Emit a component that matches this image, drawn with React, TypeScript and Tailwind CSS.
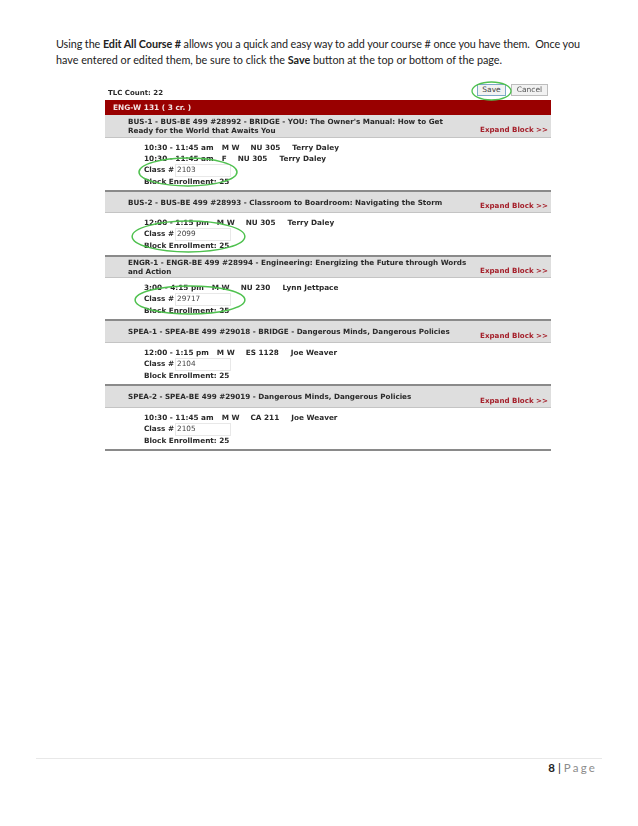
const BLOCKS = [
  {
    title: "BUS-1 - BUS-BE 499 #28992 - BRIDGE - YOU: The Owner's Manual: How to Get Ready for the World that Awaits You",
    meetings: [
      { time: "10:30 - 11:45 am", days: "M W", room: "NU 305", who: "Terry Daley" },
      { time: "10:30 - 11:45 am", days: "F", room: "NU 305", who: "Terry Daley" },
    ],
    classNo: "2103",
    ring: "w-[100px] h-[30px] -left-[6px] -top-[7.5px]",
    head: "h-[23px]",
    pad: "pb-[1.5px]",
  },
  {
    title: "BUS-2 - BUS-BE 499 #28993 - Classroom to Boardroom: Navigating the Storm",
    meetings: [{ time: "12:00 - 1:15 pm", days: "M W", room: "NU 305", who: "Terry Daley" }],
    classNo: "2099",
    ring: "w-[115px] h-[33px] -left-[13px] -top-[8.5px]",
    head: "h-[21px]",
    pad: "pb-[2.5px]",
  },
  {
    title: "ENGR-1 - ENGR-BE 499 #28994 - Engineering: Energizing the Future through Words and Action",
    meetings: [{ time: "3:00 - 4:15 pm", days: "M W", room: "NU 230", who: "Lynn Jettpace" }],
    classNo: "29717",
    ring: "w-[112px] h-[30px] -left-[10px] -top-[8.5px]",
    head: "h-[21px]",
    pad: "pb-[1.5px]",
  },
  {
    title: "SPEA-1 - SPEA-BE 499 #29018 - BRIDGE - Dangerous Minds, Dangerous Policies",
    meetings: [{ time: "12:00 - 1:15 pm", days: "M W", room: "ES 1128", who: "Joe Weaver" }],
    classNo: "2104",
    head: "h-[22px]",
    pad: "pb-[1.5px]",
  },
  {
    title: "SPEA-2 - SPEA-BE 499 #29019 - Dangerous Minds, Dangerous Policies",
    meetings: [{ time: "10:30 - 11:45 am", days: "M W", room: "CA 211", who: "Joe Weaver" }],
    classNo: "2105",
    head: "h-[22px]",
    pad: "pb-[1.5px]",
  },
];

function Ring({ className }: { className: string }) {
  return (
    <svg className={`absolute ${className}`} viewBox="0 0 100 30" preserveAspectRatio="none" fill="none">
      <ellipse cx="50" cy="15" rx="49" ry="14" stroke="#4fc14f" strokeWidth="1.5" vectorEffect="non-scaling-stroke" />
    </svg>
  );
}

function Block({ block }: { block: (typeof BLOCKS)[number] }) {
  return (
    <div>
      <div className={`flex items-center border-b border-[#c4c4c4] bg-[#dedede] pl-[23px] pr-[3px] ${block.head}`}>
        <div className="w-[340px] shrink-0 text-[7.2px] leading-[9px] font-bold text-[#2a2a2a]">{block.title}</div>
        <div className="ml-auto pt-[8px] text-[7.1px] leading-[10px] font-bold whitespace-nowrap text-[#a5202b]">{"Expand Block >>"}</div>
      </div>
      <div className={`pt-[4.5px] pl-[39px] text-[7.3px] font-bold text-[#2a2a2a] ${block.pad}`}>
        {block.meetings.map((m, i) => (
          <div key={i} className="flex h-[11px] items-center whitespace-nowrap">
            <span>{m.time}</span>
            <span className="ml-[8px]">{m.days}</span>
            <span className="ml-[11px]">{m.room}</span>
            <span className="ml-[12px]">{m.who}</span>
          </div>
        ))}
        <div className="relative flex h-[12px] items-center">
          <span className="w-[31px] whitespace-nowrap">Class #</span>
          <span className="flex h-[13px] w-[56px] items-center border border-[#e8e8e8] pl-[1px] font-normal text-[#444]">
            {block.classNo}
          </span>
          {block.ring ? <Ring className={block.ring} /> : null}
        </div>
        <div className="flex h-[12px] items-center whitespace-nowrap">Block Enrollment: 25</div>
      </div>
      <div className="h-[2px] bg-[#8a8a8a]" />
    </div>
  );
}

export default function App() {
  return (
    <div
      className="flex h-[826px] w-[638px] flex-col overflow-hidden bg-white text-[#222]"
      style={{ fontFamily: "Lato, 'Open Sans', sans-serif" }}
    >
      <div className="px-[56px] pt-[36px] text-[10.8px] leading-[16px]">
        <p className="whitespace-pre tracking-[-0.08px]">
          Using the <b>Edit All Course #</b> allows you a quick and easy way to add your course # once you have them.{"  "}Once you
        </p>
        <p className="whitespace-pre">
          have entered or edited them, be sure to click the <b>Save</b> button at the top or bottom of the page.
        </p>
      </div>

      <div
        className="ml-[105px] mt-[16px] w-[446px] blur-[0.3px]"
        style={{ fontFamily: "'DejaVu Sans', Verdana, sans-serif" }}
      >
        <div className="relative flex h-[16px] items-start">
          <div className="ml-[3px] mt-[4px] text-[7px] leading-[10px] font-bold text-[#2a2a2a]">TLC Count: 22</div>
          <div className="ml-auto mr-[3px] flex gap-[5px]">
            <button className="relative h-[12px] w-[29px] border border-[#7fa9c9] bg-[#f2f2f2] text-[7.5px] leading-[10px] text-[#444]">
              Save
              <svg className="absolute -left-[7px] -top-[4px] h-[20px] w-[41px]" viewBox="0 0 41 20" fill="none">
                <ellipse cx="20.5" cy="10" rx="19.5" ry="9" stroke="#4fc14f" strokeWidth="1.3" />
              </svg>
            </button>
            <button className="h-[12px] w-[37px] border border-[#bdbdbd] bg-[#f2f2f2] text-[7.5px] leading-[10px] text-[#555]">
              Cancel
            </button>
          </div>
        </div>
        <div className="flex h-[15px] items-center bg-[#990000] pl-[8px] text-[7.4px] font-bold text-[#f3e3e3]">ENG-W 131 ( 3 cr. )</div>
        {BLOCKS.map((b) => (
          <Block key={b.classNo} block={b} />
        ))}
      </div>

      <div className="mx-[36px] mt-auto mb-[50px] border-t border-[#e8e8e8] pt-[1px] pr-[5px] text-right text-[11.5px] leading-[16px]">
        <b className="text-[#222]">8</b> <span className="text-[#222]">|</span>{" "}
        <span className="tracking-[2.2px] text-[#8c8c8c]">Page</span>
      </div>
    </div>
  );
}
